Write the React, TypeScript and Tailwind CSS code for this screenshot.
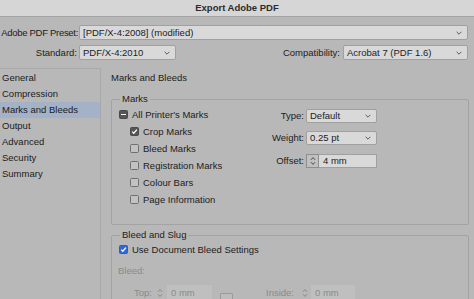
import React from "react";

function Chevron() {
  return (
    <svg width="6" height="4" viewBox="0 0 6 4" className="shrink-0">
      <path d="M0.6 0.8 L3 3.2 L5.4 0.8" fill="none" stroke="#5a5a5a" strokeWidth="1" />
    </svg>
  );
}

function Select({ text, className }: { text: string; className: string }) {
  return (
    <div className={`bg-[#d9d9d9] border border-[#a0a0a0] rounded-[2px] flex items-center justify-between pl-[3px] pr-[5px] ${className}`}>
      <span className="whitespace-nowrap">{text}</span>
      <Chevron />
    </div>
  );
}

function StepIcon({ color }: { color: string }) {
  return (
    <svg width="6" height="10" viewBox="0 0 6 10">
      <path d="M1 3.8 L3 1.6 L5 3.8 M1 6.2 L3 8.4 L5 6.2" fill="none" stroke={color} strokeWidth="1" />
    </svg>
  );
}

function Check({ state }: { state: "off" | "on" | "mixed" | "blue" }) {
  if (state === "off")
    return <div className="w-[9px] h-[9px] shrink-0 border border-[#6f6f6f] rounded-[1.5px] bg-[#c2c2c2]" />;
  const bg = state === "blue" ? "bg-[#2f68dc] border-[#2a5cc4]" : "bg-[#565656] border-[#4a4a4a]";
  return (
    <div className={`w-[9px] h-[9px] shrink-0 border rounded-[1.5px] flex items-center justify-center ${bg}`}>
      {state === "mixed" ? (
        <div className="w-[5px] h-[1.5px] bg-white" />
      ) : (
        <svg width="7" height="7" viewBox="0 0 7 7">
          <path d="M1.2 3.6 L2.8 5.2 L5.9 1.6" fill="none" stroke="white" strokeWidth="1.3" />
        </svg>
      )}
    </div>
  );
}

function CheckRow({ state, label, indent }: { state: "off" | "on" | "mixed" | "blue"; label: string; indent?: boolean }) {
  return (
    <div className={`h-[17px] flex items-center gap-[4px] ${indent ? "pl-[11px]" : ""}`}>
      <Check state={state} />
      <span className="whitespace-nowrap">{label}</span>
    </div>
  );
}

export default function App() {
  const side = ["General", "Compression", "Marks and Bleeds", "Output", "Advanced", "Security", "Summary"];
  return (
    <div className="w-[474px] h-[299px] overflow-hidden bg-[#b8b8b8] text-[#1c1c1c] font-['Liberation_Sans',Arial,sans-serif] text-[9.5px] leading-[12px]">
      <div className="h-[17px] bg-[#d6d6d6] border-b border-[#a4a4a4] flex items-center justify-center font-bold text-[#2b2b2b]">
        Export Adobe PDF
      </div>
      <div className="pt-[8px] pr-[6px] flex flex-col gap-[5px]">
        <div className="flex items-center h-[15px]">
          <div className="w-[78px] shrink-0 flex justify-end whitespace-nowrap">
            <span className="shrink-0 tracking-[-0.3px]">Adobe PDF Preset:</span>
          </div>
          <Select className="ml-[1px] flex-1 h-[15px]" text="[PDF/X-4:2008] (modified)" />
        </div>
        <div className="flex items-center h-[15px]">
          <div className="w-[77px] shrink-0 text-right">Standard:</div>
          <Select className="ml-[2px] w-[97px] h-[15px]" text="PDF/X-4:2010" />
          <div className="ml-auto mr-[3px]">Compatibility:</div>
          <Select className="w-[125px] h-[15px]" text="Acrobat 7 (PDF 1.6)" />
        </div>
      </div>
      <div className="mt-[8px] flex">
        <div className="w-[101px] shrink-0 border-t border-r border-[#a9a9a9] pt-[1px] h-[240px]">
          {side.map((s) => (
            <div
              key={s}
              className={`h-[16px] flex items-center pl-[2px] ${s === "Marks and Bleeds" ? "bg-[#a3b2c7]" : ""}`}
            >
              {s}
            </div>
          ))}
        </div>
        <div className="flex-1 pl-[10px] pr-[5px]">
          <div className="h-[17px] flex items-center pt-[2px]">Marks and Bleeds</div>
          <fieldset className="mt-[8px] border border-[#a3a3a3] rounded-[2px] pb-[16px]">
            <legend className="ml-[8px] px-[2px] leading-[12px]">Marks</legend>
            <div className="flex pt-[1px]">
              <div className="w-[152px] pl-[7px] shrink-0">
                <CheckRow state="mixed" label="All Printer's Marks" />
                <CheckRow state="on" label="Crop Marks" indent />
                <CheckRow state="off" label="Bleed Marks" indent />
                <CheckRow state="off" label="Registration Marks" indent />
                <CheckRow state="off" label="Colour Bars" indent />
                <CheckRow state="off" label="Page Information" indent />
              </div>
              <div className="pt-[3px] flex flex-col gap-[8px]">
                <div className="flex items-center h-[14px]">
                  <div className="w-[40px] text-right">Type:</div>
                  <Select className="ml-[2px] w-[71px] h-[14px]" text="Default" />
                </div>
                <div className="flex items-center h-[14px]">
                  <div className="w-[40px] text-right">Weight:</div>
                  <Select className="ml-[2px] w-[71px] h-[14px]" text="0.25 pt" />
                </div>
                <div className="flex items-center h-[14px] mt-[1px]">
                  <div className="w-[40px] text-right">Offset:</div>
                  <div className="ml-[2px] w-[13px] h-[14px] border border-[#8e8e8e] bg-[#c0c0c0] flex items-center justify-center">
                    <StepIcon color="#4a4a4a" />
                  </div>
                  <div className="w-[58px] h-[14px] bg-[#d9d9d9] border border-l-0 border-[#a0a0a0] flex items-center pl-[4px]">
                    4 mm
                  </div>
                </div>
              </div>
            </div>
          </fieldset>
          <fieldset className="mt-[4px] border border-[#a3a3a3] rounded-[2px] pb-[20px]">
            <legend className="ml-[8px] px-[2px] leading-[12px]">Bleed and Slug</legend>
            <div className="pl-[7px]">
              <CheckRow state="blue" label="Use Document Bleed Settings" />
            </div>
            <div className="mt-[7px] h-[12px] pl-[6px] text-[#8a8a8a]">Bleed:</div>
            <div className="mt-[8px] flex items-start text-[#8a8a8a]">
              <div className="w-[40px] h-[15px] flex items-center justify-end">Top:</div>
              <div className="ml-[3px] w-[10px] h-[15px] flex items-center justify-center">
                <StepIcon color="#8a8a8a" />
              </div>
              <div className="ml-[2px] w-[45px] h-[15px] bg-[#bfbfbf] flex items-center pl-[4px]">0 mm</div>
              <div className="ml-[8px] mt-[8px] w-[13px] h-[12px] border border-[#9a9a9a] rounded-[1px] bg-[#bcbcbc]" />
              <div className="ml-[6px] w-[55px] h-[15px] flex items-center justify-end">Inside:</div>
              <div className="ml-[6px] w-[10px] h-[15px] flex items-center justify-center">
                <StepIcon color="#8a8a8a" />
              </div>
              <div className="ml-[1px] w-[44px] h-[15px] bg-[#bfbfbf] flex items-center pl-[4px]">0 mm</div>
            </div>
          </fieldset>
        </div>
      </div>
    </div>
  );
}
